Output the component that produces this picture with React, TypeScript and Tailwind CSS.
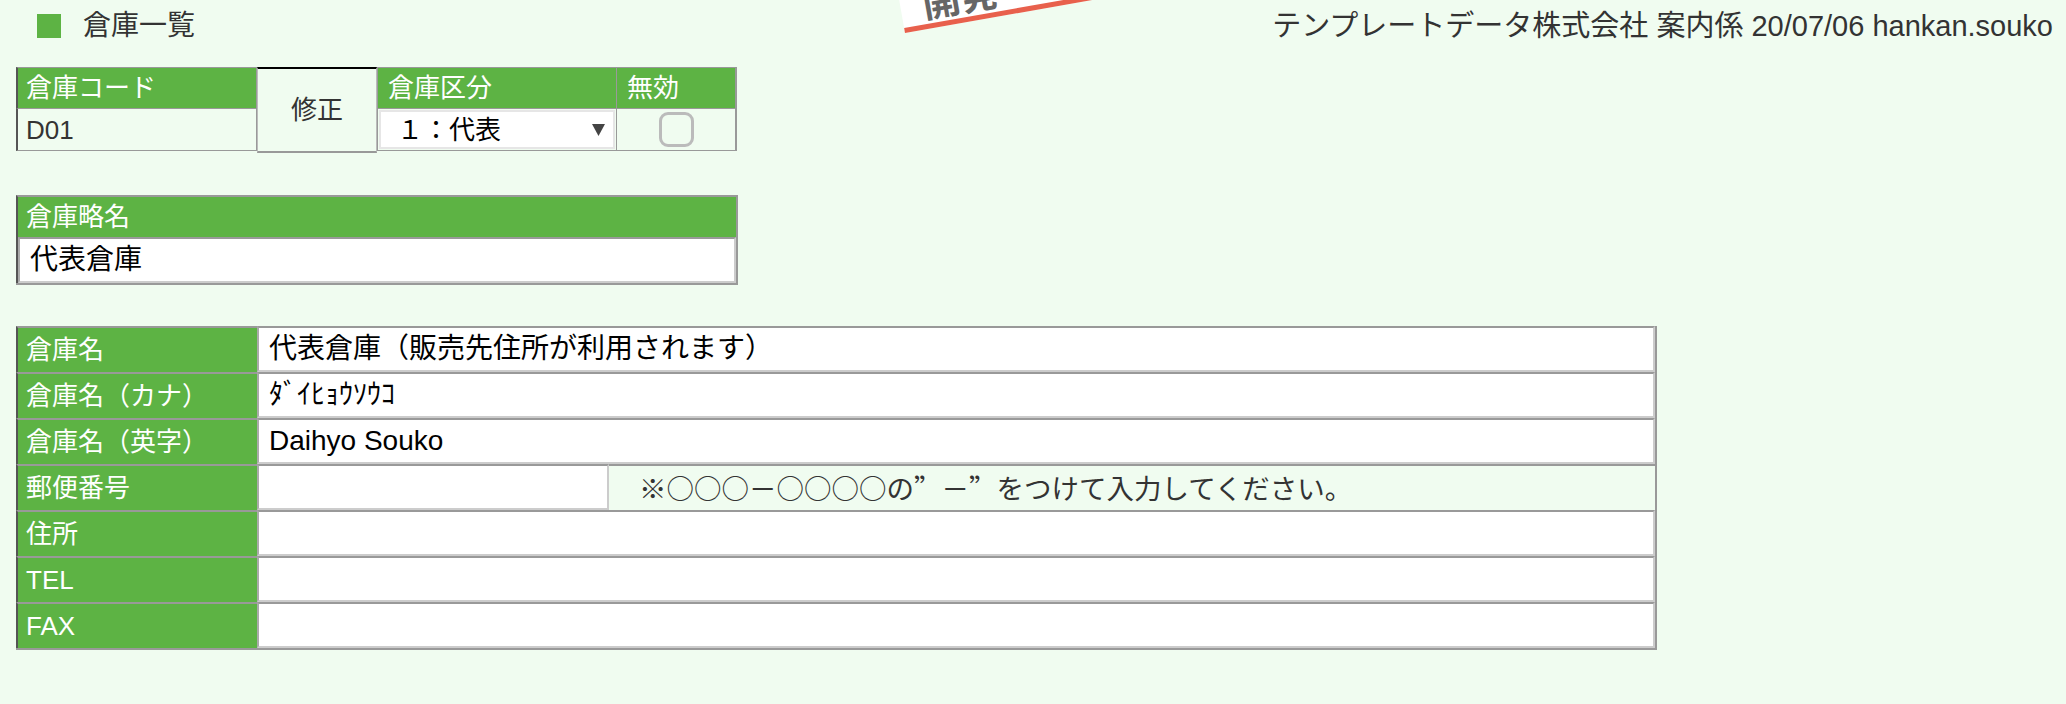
import React from "react";

const green = "bg-[#5db344]";

function Row({ label, children }: { label: string; children?: React.ReactNode }) {
  return (
    <div className="flex h-[46px]">
      <div className={`w-[241px] shrink-0 ${green} border-l-2 border-l-[#555] border-t-2 border-t-[#999] flex items-center pl-2 text-white`}>
        {label}
      </div>
      {children ?? <TextCell value="" />}
    </div>
  );
}

function TextCell({ value }: { value: string }) {
  return (
    <div className="flex-1 bg-white border-2 border-t-[#999] border-l-[#aaa] border-b-[#ccc] border-r-[#ccc] flex items-center pl-[10px] text-[28px] text-black">
      {value}
    </div>
  );
}

export default function App() {
  return (
    <div className="relative min-h-screen overflow-hidden bg-[#f0fcf0] font-['Liberation_Sans','Noto_Sans_CJK_JP',sans-serif] text-[26px] leading-none text-[#333]">
      {/* stamp */}
      <div className="absolute left-[905px] top-[-37px] h-[70px] w-[260px] origin-bottom-left -rotate-[10deg] bg-white border-b-[5px] border-b-[#e8604c] flex items-end pl-[22px] pb-0 text-[38px] font-bold text-[#666]">
        開発
      </div>

      <div className="pt-[13px]">
        <div className="flex items-center justify-between pl-[37px] pr-[13px] h-[26px]">
          <div className="flex items-center gap-[22px]">
            <div className={`w-[24px] h-[24px] ${green}`} />
            <span className="text-[28px]">倉庫一覧</span>
          </div>
          <div className="text-[29px]">テンプレートデータ株式会社 案内係 20/07/06 hankan.souko</div>
        </div>

        {/* code / type / invalid */}
        <div className="ml-[16px] mt-[28px] grid w-[721px] grid-cols-[241px_120px_240px_120px] grid-rows-[42px_42px]">
          <div className={`${green} border-l-2 border-l-[#555] border-t border-t-[#999] border-r border-r-[#999] border-b border-b-[#999] flex items-center pl-2 text-white`}>
            倉庫コード
          </div>
          <div className="row-span-2 mb-[-2px] border-t-2 border-t-black border-b-2 border-b-[#999] border-x border-x-[#bbb] flex items-center justify-center text-[#333]">
            修正
          </div>
          <div className={`${green} border-t border-t-[#999] border-x border-x-[#999] border-b border-b-[#999] flex items-center pl-[10px] text-white`}>
            倉庫区分
          </div>
          <div className={`${green} border-t border-t-[#999] border-r-2 border-r-[#999] border-b border-b-[#999] flex items-center pl-[10px] text-white`}>
            無効
          </div>
          <div className="border-l-2 border-l-[#555] border-r border-r-[#999] border-b border-b-[#999] flex items-center pl-2 text-[#333]">
            D01
          </div>
          <div className="border-x border-x-[#999] border-b border-b-[#999] p-[1px]">
            <div className="h-full bg-white border-2 border-[#e6e6e6] flex items-center justify-between pl-[16px] pr-[8px] text-black">
              <span>１：代表</span>
              <svg width="13" height="12" viewBox="0 0 13 12">
                <polygon points="0,0 13,0 6.5,12" fill="#444" />
              </svg>
            </div>
          </div>
          <div className="border-r-2 border-r-[#999] border-b border-b-[#999] flex items-center justify-center">
            <div className="w-[35px] h-[35px] rounded-[9px] border-[3px] border-[#bbb]" />
          </div>
        </div>

        {/* short name */}
        <div className="ml-[16px] mt-[44px] w-[722px] border-r-2 border-r-[#999] border-b-2 border-b-[#999]">
          <div className={`h-[42px] ${green} border-l-2 border-l-[#555] border-t-2 border-t-[#999] flex items-center pl-2 text-white`}>
            倉庫略名
          </div>
          <div className="flex h-[46px] border-l-2 border-l-[#555]">
            <TextCell value="代表倉庫" />
          </div>
        </div>

        {/* detail */}
        <div className="ml-[16px] mt-[41px] w-[1641px] border-r-2 border-r-[#999] border-b-2 border-b-[#999]">
          <Row label="倉庫名">
            <TextCell value="代表倉庫（販売先住所が利用されます）" />
          </Row>
          <Row label="倉庫名（カナ）">
            <TextCell value="ﾀﾞｲﾋｮｳｿｳｺ" />
          </Row>
          <Row label="倉庫名（英字）">
            <TextCell value="Daihyo Souko" />
          </Row>
          <Row label="郵便番号">
            <div className="w-[352px] bg-white border-2 border-t-[#999] border-l-[#aaa] border-b-[#ccc] border-r-[#ccc]" />
            <div className="flex-1 border-t-2 border-t-[#999] flex items-center pl-[30px] font-['Noto_Sans_CJK_JP',sans-serif] text-[27.5px] [font-feature-settings:'fwid'] text-[#333]">
              ※○○○－○○○○の”－”をつけて入力してください。
            </div>
          </Row>
          <Row label="住所" />
          <Row label="TEL" />
          <Row label="FAX" />
        </div>
      </div>
    </div>
  );
}
